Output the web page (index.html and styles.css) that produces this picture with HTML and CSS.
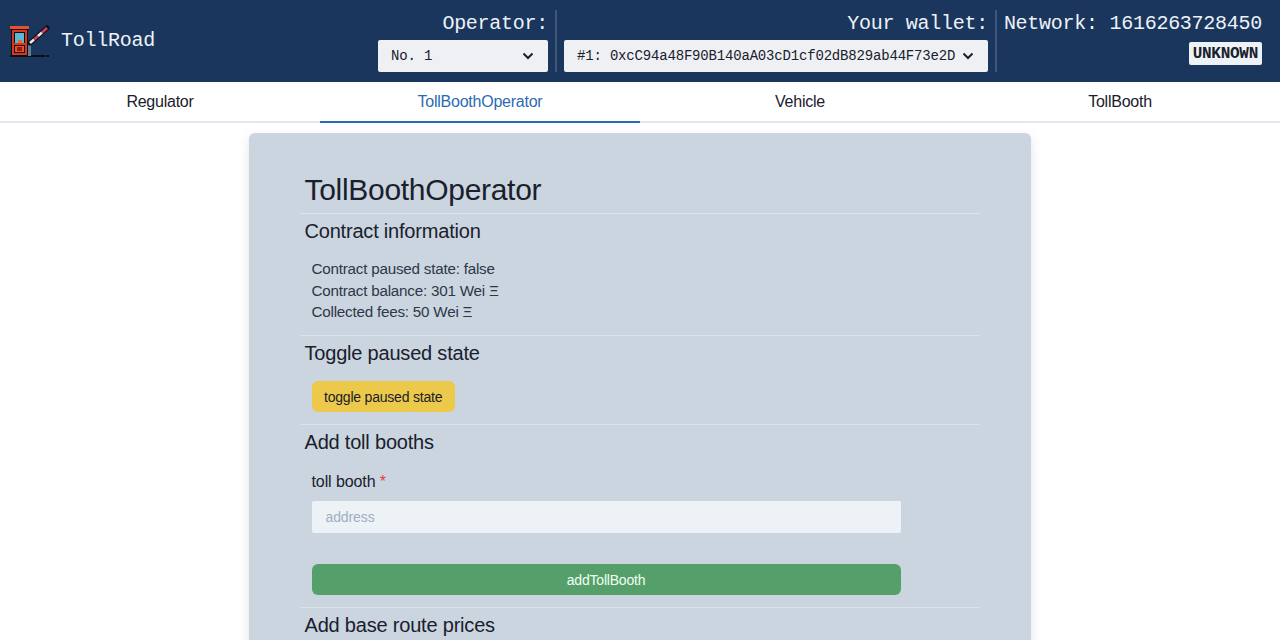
FILE: index.html
```html
<!DOCTYPE html>
<html lang="en">
<head>
<meta charset="utf-8">
<title>TollRoad</title>
<link rel="stylesheet" href="styles.css">
</head>
<body>
<header class="topbar">
  <div class="brand">
    <svg class="logo" width="40" height="32" viewBox="0 0 40 32" shape-rendering="crispEdges" aria-hidden="true">
      <rect x="0" y="30" width="35" height="2" fill="#0b0f1a"/>
      <rect x="36" y="30" width="3" height="2" fill="#0b0f1a"/>
      <rect x="0" y="1" width="19" height="4" fill="#e8502e"/>
      <rect x="0" y="4" width="19" height="1" fill="#0b0f1a"/>
      <rect x="1" y="5" width="17" height="26" fill="#0b0f1a"/>
      <rect x="2" y="5" width="15" height="25" fill="#d9361e"/>
      <rect x="4" y="7" width="11" height="11" fill="#0b0f1a"/>
      <rect x="5" y="8" width="9" height="10" fill="#5bb8d4"/>
      <rect x="8" y="15" width="4" height="3" fill="#e8692a"/>
      <rect x="4" y="20" width="11" height="8" fill="#0b0f1a"/>
      <rect x="5" y="21" width="9" height="6" fill="#e8502e"/>
      <rect x="7" y="22" width="5" height="4" fill="#8c1f10"/>
      <rect x="18" y="18" width="3" height="13" fill="#5f7f8c"/>
      <line x1="20" y1="18" x2="37" y2="3" stroke="#0b0f1a" stroke-width="5" stroke-linecap="round" shape-rendering="auto"/>
      <line x1="20" y1="18" x2="24" y2="14.500" stroke="#e8e8e8" stroke-width="2.600" shape-rendering="auto"/>
      <line x1="24" y1="14.500" x2="28" y2="11" stroke="#d8405a" stroke-width="2.600" shape-rendering="auto"/>
      <line x1="28" y1="11" x2="32" y2="7.500" stroke="#e8e8e8" stroke-width="2.600" shape-rendering="auto"/>
      <line x1="32" y1="7.500" x2="37" y2="3" stroke="#d8405a" stroke-width="2.600" shape-rendering="auto"/>
    </svg>
    <span class="brand-name">TollRoad</span>
  </div>
  <div class="controls">
    <div class="field field-operator">
      <label class="field-label">Operator:</label>
      <div class="select"><span>No. 1</span><svg class="chev" width="12" height="8" viewBox="0 0 12 8" aria-hidden="true"><path d="M1.500 1.500 6 6l4.500-4.500" fill="none" stroke="#1a202c" stroke-width="2"/></svg></div>
    </div>
    <div class="field field-wallet">
      <label class="field-label">Your wallet:</label>
      <div class="select"><span>#1: 0xcC94a48F90B140aA03cD1cf02dB829ab44F73e2D</span><svg class="chev" width="12" height="8" viewBox="0 0 12 8" aria-hidden="true"><path d="M1.500 1.500 6 6l4.500-4.500" fill="none" stroke="#1a202c" stroke-width="2"/></svg></div>
    </div>
    <div class="network">
      <div class="field-label">Network: 1616263728450</div>
      <span class="badge">UNKNOWN</span>
    </div>
  </div>
</header>
<nav class="tabs">
  <a class="tab">Regulator</a>
  <a class="tab active">TollBoothOperator</a>
  <a class="tab">Vehicle</a>
  <a class="tab">TollBooth</a>
</nav>
<main class="card">
  <h1 class="title">TollBoothOperator</h1>
  <section class="section">
    <h2 class="heading">Contract information</h2>
    <div class="body info">
      <p>Contract paused state: false</p>
      <p>Contract balance: 301 Wei Ξ</p>
      <p>Collected fees: 50 Wei Ξ</p>
    </div>
  </section>
  <section class="section">
    <h2 class="heading">Toggle paused state</h2>
    <div class="body toggle-body">
      <button class="btn btn-yellow">toggle paused state</button>
    </div>
  </section>
  <section class="section">
    <h2 class="heading">Add toll booths</h2>
    <div class="body form">
      <label class="form-label">toll booth <span class="req">*</span></label>
      <input class="input" placeholder="address">
      <button class="btn btn-green">addTollBooth</button>
    </div>
  </section>
  <section class="section">
    <h2 class="heading">Add base route prices</h2>
  </section>
</main>
</body>
</html>
```
FILE: styles.css
```css
* { box-sizing: border-box; }
html, body { margin: 0; padding: 0; height: 640px; overflow: hidden; background: #fff; }
body { font-family: "Liberation Sans", Arial, sans-serif; color: #1a202c; }

.topbar {
  height: 82px;
  background: #1a365d;
  display: flex;
  justify-content: space-between;
  align-items: center;
  padding: 0 18px 0 10px;
  font-family: "Liberation Mono", monospace;
}
.brand { display: flex; align-items: center; gap: 11px; }
.logo { display: block; }
.brand-name { font-size: 20px; letter-spacing: -0.25px; line-height: 24px; margin-top: -1px; color: #edf2f7; }
.controls { display: flex; align-items: stretch; height: 62px; }
.field { display: flex; flex-direction: column; align-items: flex-end; justify-content: space-between; }
.field-label { font-size: 20px; letter-spacing: -0.27px; line-height: 26px; padding-top: 1px; color: #edf2f7; white-space: pre; }
.field-operator { width: 179px; padding-right: 7px; border-right: 2px solid #3f5878; }
.field-wallet { width: 440px; padding: 0 7px; border-right: 2px solid #3f5878; }
.network { width: 265px; padding-left: 7px; display: flex; flex-direction: column; align-items: flex-end; gap: 5px; }
.select {
  height: 32px;
  width: 100%;
  background: #eef0f4;
  border-radius: 2px;
  display: flex;
  align-items: center;
  justify-content: space-between;
  padding: 0 14px 0 13px;
  font-size: 14px;
  letter-spacing: -0.18px;
  color: #1a202c;
  white-space: nowrap;
}
.badge {
  background: #edf2f7;
  color: #1a202c;
  font-size: 16px;
  letter-spacing: -0.27px;
  font-weight: 700;
  line-height: 22px;
  padding: 1px 4px 0;
  border-radius: 2px;
}

.tabs { display: flex; height: 41px; border-bottom: 2px solid #e2e8f0; }
.tab {
  flex: 1;
  height: 41px;
  display: flex;
  align-items: center;
  justify-content: center;
  font-size: 16px;
  letter-spacing: -0.24px;
  padding-bottom: 2px;
  color: #1a202c;
}
.tab.active { color: #2b6cb0; border-bottom: 2px solid #2b6cb0; padding-bottom: 0; }

.card {
  width: 782px;
  margin: 10px auto 0;
  background: #cbd5e0;
  border-radius: 6px;
  box-shadow: 0 4px 12px rgba(0, 0, 0, 0.1);
  padding: 36px 51px 60px;
}
.title { margin: 0; padding: 0 5px 2px 4.5px; font-size: 30px; letter-spacing: -0.3px; font-weight: 400; line-height: 42px; }
.section { border-top: 1px solid #dbe3ec; }
.heading { margin: 0; padding: 1px 5px 0 4.5px; font-size: 20px; letter-spacing: -0.2px; font-weight: 400; line-height: 33px; }
.body { padding: 0 12px; }
.info { padding-top: 10px; padding-bottom: 12px; padding-left: 11.5px; font-size: 15.2px; letter-spacing: -0.21px; line-height: 21.6px; }
.info p { margin: 0; color: #2d3748; }
.toggle-body { padding-top: 11px; padding-bottom: 12px; }
.btn {
  display: block;
  border: 0;
  height: 31px;
  border-radius: 6px;
  padding-top: 2px;
  font-family: inherit;
  font-size: 14px;
  letter-spacing: -0.21px;
}
.btn-yellow { background: #ecc94b; color: #1a202c; padding-left: 12px; padding-right: 13px; }
.btn-green { background: #55a06a; color: #f0fff4; width: 589px; padding-left: 0; padding-right: 1px; }
.form { padding-top: 11px; padding-bottom: 12px; }
.form-label { display: block; margin-left: -0.5px; font-size: 16px; letter-spacing: -0.1px; line-height: 24px; margin-bottom: 7px; }
.req { color: #e53e3e; }
.input {
  display: block;
  width: 589px;
  height: 32px;
  border: 0;
  border-radius: 2px;
  background: #edf2f7;
  padding: 0 13.5px;
  font-family: inherit;
  font-size: 14px;
  letter-spacing: -0.1px;
  margin-bottom: 31px;
}
.input::placeholder { color: #a0aec0; opacity: 1; }
```
